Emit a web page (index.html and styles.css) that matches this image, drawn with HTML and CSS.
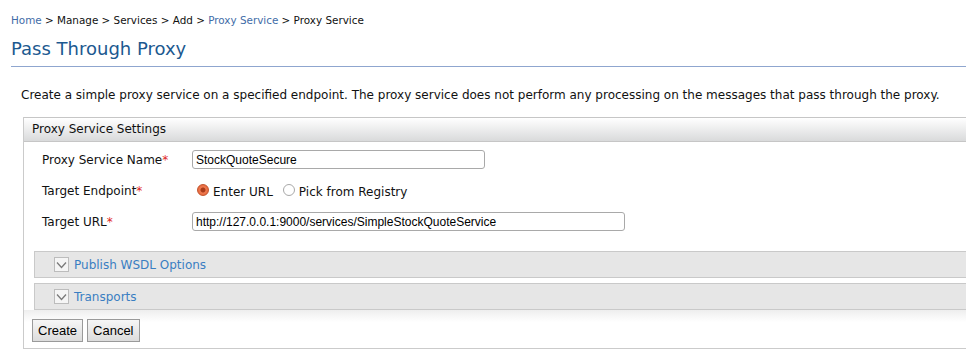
FILE: index.html
```html
<!DOCTYPE html>
<html lang="en">
<head>
  <meta charset="UTF-8" />
  <title>Pass Through Proxy</title>
  <link rel="stylesheet" href="styles.css">
</head>
<body>
  <div class="page">
    <div class="breadcrumb">
      <a href="#">Home</a> &gt; Manage &gt; Services &gt; Add &gt; <a href="#">Proxy Service</a> &gt; Proxy Service
    </div>
    <h2 class="title">Pass Through Proxy</h2>

    <div class="content">
      <p class="intro">Create a simple proxy service on a specified endpoint. The proxy service does not perform any processing on the messages that pass through the proxy.</p>

      <div class="settings">
        <div class="settings-head">Proxy Service Settings</div>

        <div class="form">
          <div class="row">
            <label class="label">Proxy Service Name<span class="req">*</span></label>
            <input type="text" class="field name-field" value="StockQuoteSecure" />
          </div>
          <div class="row">
            <label class="label">Target Endpoint<span class="req">*</span></label>
            <div class="radios">
              <span class="radio checked"></span><span class="radio-text">Enter URL</span>
              <span class="radio"></span><span class="radio-text">Pick from Registry</span>
            </div>
          </div>
          <div class="row">
            <label class="label">Target URL<span class="req">*</span></label>
            <input type="text" class="field url-field" value="http://127.0.0.1:9000/services/SimpleStockQuoteService" />
          </div>
        </div>

        <div class="sections">
          <div class="section">
            <span class="toggle">
              <svg width="11" height="8" viewBox="0 0 11 8"><path d="M1 1.5 L5.5 6.5 L10 1.5" fill="none" stroke="#7a7a7a" stroke-width="1.3"/></svg>
            </span>
            <a href="#">Publish WSDL Options</a>
          </div>
          <div class="section">
            <span class="toggle">
              <svg width="11" height="8" viewBox="0 0 11 8"><path d="M1 1.5 L5.5 6.5 L10 1.5" fill="none" stroke="#7a7a7a" stroke-width="1.3"/></svg>
            </span>
            <a href="#">Transports</a>
          </div>
        </div>

        <div class="buttons">
          <button>Create</button>
          <button>Cancel</button>
        </div>
      </div>
    </div>
  </div>
</body>
</html>
```

FILE: styles.css
```css
html, body {
  overflow: hidden;
}

body {
  margin: 0;
  background: #fff;
  color: #000;
  font-family: "DejaVu Sans", Verdana, sans-serif;
}

a {
  color: #3a7ec2;
  text-decoration: none;
}

.page {
  width: 1010px;
  padding: 12px 0 0 11px;
}

.breadcrumb {
  font-size: 10.4px;
  line-height: 16px;
  color: #111;
}

.breadcrumb a {
  color: #3f6ca8;
}

.title {
  margin: 10px 0 0;
  padding-bottom: 6px;
  font-size: 18px;
  font-weight: normal;
  line-height: 22px;
  color: #1c5990;
  border-bottom: 1px solid #8fa6cf;
}

.content {
  padding-left: 10px;
}

.intro {
  margin: 20px 0 0;
  font-size: 12px;
  line-height: 16px;
  color: #111;
}

.settings {
  margin: 14px 0 0 2px;
  border: 1px solid #cbcbcb;
  border-top: none;
}

.settings-head {
  height: 23px;
  line-height: 22px;
  padding-left: 8px;
  font-size: 12px;
  color: #111;
  border-top: 1px solid #c6c6c6;
  border-bottom: 1px solid #c6c6c6;
  background: linear-gradient(#ffffff, #d9dadb);
}

.form {
  padding: 2px 0 0 18px;
}

.row {
  display: flex;
  align-items: center;
  height: 31px;
}

.label {
  width: 150px;
  font-size: 12px;
  color: #111;
}

.req {
  color: #e0261f;
}

.field {
  height: 19px;
  box-sizing: border-box;
  padding: 0 3px;
  border: 1px solid #a9a9a9;
  border-radius: 3px;
  font-family: "Liberation Sans", Arial, sans-serif;
  font-size: 12px;
  color: #000;
}

.name-field {
  width: 293px;
}

.url-field {
  width: 433px;
}

.radios {
  display: flex;
  align-items: center;
  padding-left: 5px;
  padding-top: 3px;
  font-size: 12px;
}

.radio {
  width: 12px;
  height: 12px;
  box-sizing: border-box;
  border-radius: 50%;
  border: 1px solid #a8a8a8;
  background: #fff;
  margin-top: -4px;
}

.radio.checked {
  border-color: #c2532b;
  background: radial-gradient(circle, #a93b1a 0, #a93b1a 2px, #ef7a4f 3px, #e5633a 6px);
}

.radio-text {
  margin: 0 10px 0 4px;
  color: #111;
}

.sections {
  padding: 14px 0 0 10px;
  display: flex;
  flex-direction: column;
  gap: 5px;
}

.section {
  display: flex;
  align-items: center;
  height: 25px;
  padding-left: 19px;
  background: #e6e6e6;
  border: 1px solid #c9c9c9;
  font-size: 12px;
}

.toggle {
  display: flex;
  align-items: center;
  justify-content: center;
  width: 15px;
  height: 15px;
  box-sizing: border-box;
  border: 1px solid #bcbcbc;
  background: #f5f5f5;
  margin-right: 5px;
}

.buttons {
  display: flex;
  gap: 4px;
  padding: 9px 0 6px 8px;
  background: linear-gradient(#eeeeee, #ffffff 12px);
}

button {
  height: 23px;
  padding: 0 5px;
  font-family: "Liberation Sans", Arial, sans-serif;
  font-size: 13px;
  color: #000;
  border: 1px solid #9a9a9a;
  background: linear-gradient(#f6f6f6, #dcdcdc);
  cursor: pointer;
}
```
